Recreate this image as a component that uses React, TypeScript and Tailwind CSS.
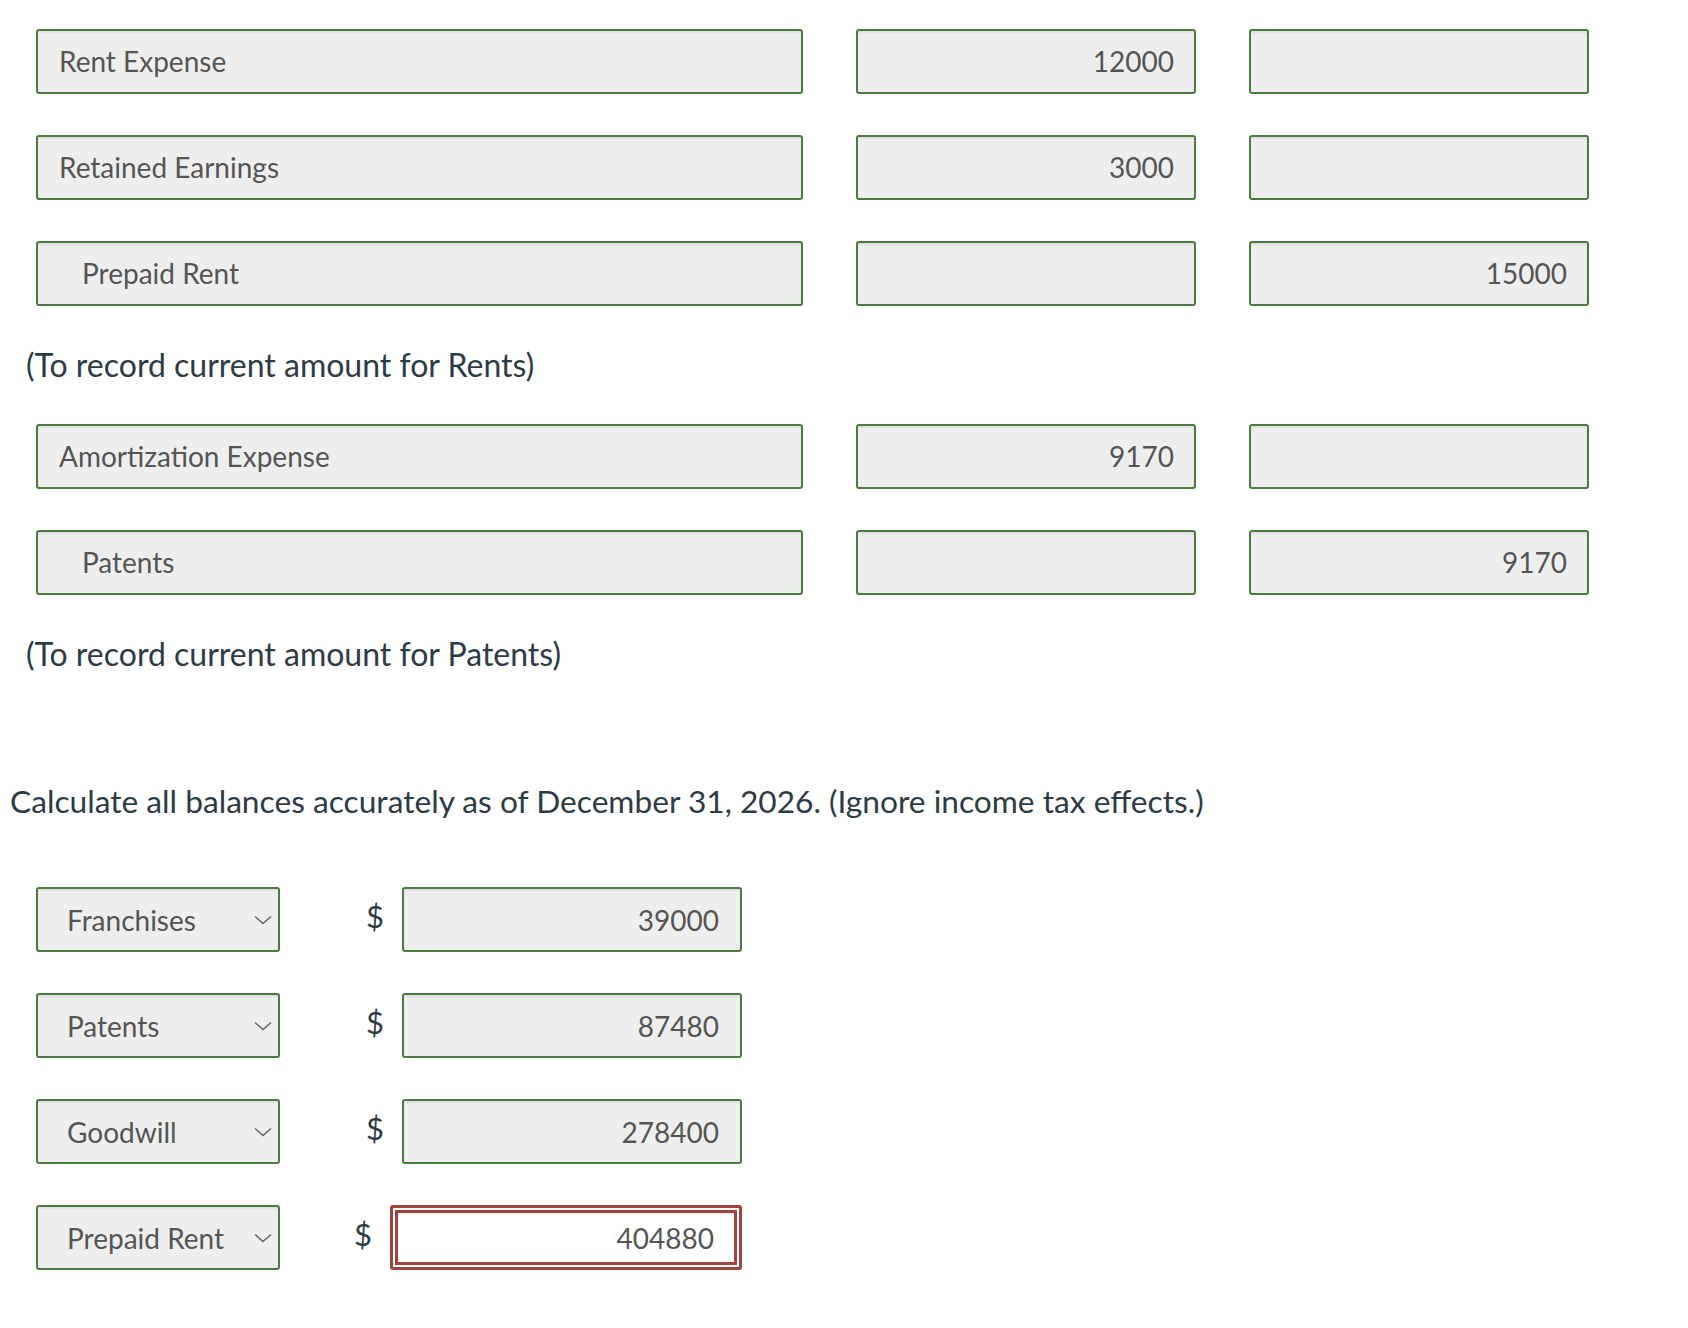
import React from "react";

const boxBase =
  "h-[65px] rounded-[3px] border-2 border-[#4d7a41] bg-[#eeeeee] shadow-[inset_0_2px_2px_rgba(0,0,0,0.06)] flex items-center text-[28px] text-[#555555]";

function LabelBox({ text, indent }: { text: string; indent?: boolean }) {
  return (
    <div className={`${boxBase} w-[767px] ${indent ? "pl-[44px]" : "pl-[21px]"}`}>
      <span className="-mt-[1px]">{text}</span>
    </div>
  );
}

function NumBox({ value }: { value?: string }) {
  return (
    <div className={`${boxBase} w-[340px] justify-end pr-[20px]`}>
      <span className="-mt-[1px]">{value ?? ""}</span>
    </div>
  );
}

function JournalRow({
  label,
  indent,
  debit,
  credit,
}: {
  label: string;
  indent?: boolean;
  debit?: string;
  credit?: string;
}) {
  return (
    <div className="flex gap-[53px] pl-[36px]">
      <LabelBox text={label} indent={indent} />
      <NumBox value={debit} />
      <NumBox value={credit} />
    </div>
  );
}

function Caption({ text }: { text: string }) {
  return <div className="h-[36px] leading-[36px] pl-[26px] text-[32px] text-[#2d3b45]">{text}</div>;
}

function Chevron() {
  return (
    <svg width="18" height="10" viewBox="0 0 18 10" className="shrink-0">
      <polyline points="1,1.5 9,8.5 17,1.5" fill="none" stroke="#666666" strokeWidth="1.6" />
    </svg>
  );
}

function BalanceRow({ label, value, error }: { label: string; value: string; error?: boolean }) {
  return (
    <div className="flex items-center pl-[36px]">
      <div className={`${boxBase} w-[244px] justify-between pl-[29px] pr-[6px]`}>
        <span>{label}</span>
        <Chevron />
      </div>
      <div className="w-[462px] flex items-center justify-end gap-[18px]">
        <span className="text-[31px] text-[#2d3b45] -mt-[6px]">$</span>
        {error ? (
          <div className="w-[352px] h-[65px] rounded-[3px] border-[3px] border-[#a0443f] p-[2px] bg-white">
            <div className="h-full border-[3px] border-[#a0443f] bg-white flex items-center justify-end pr-[20px] text-[28px] text-[#555555] shadow-[inset_0_2px_2px_rgba(0,0,0,0.05)]">
              {value}
            </div>
          </div>
        ) : (
          <div className={`${boxBase} w-[340px] justify-end pr-[21px]`}>{value}</div>
        )}
      </div>
    </div>
  );
}

export default function App() {
  return (
    <div className="w-[1688px] min-h-[1328px] bg-white font-['Lato',sans-serif] pt-[29px]">
      <div className="flex flex-col gap-[41px]">
        <JournalRow label="Rent Expense" debit="12000" />
        <JournalRow label="Retained Earnings" debit="3000" />
        <JournalRow label="Prepaid Rent" indent credit="15000" />
        <Caption text="(To record current amount for Rents)" />
        <JournalRow label="Amortization Expense" debit="9170" />
        <JournalRow label="Patents" indent credit="9170" />
        <Caption text="(To record current amount for Patents)" />
      </div>
      <div className="mt-[111px] h-[36px] leading-[36px] pl-[10px] text-[31.7px] text-[#2d3b45]">
        Calculate all balances accurately as of December 31, 2026. (Ignore income tax effects.)
      </div>
      <div className="mt-[68px] flex flex-col gap-[41px]">
        <BalanceRow label="Franchises" value="39000" />
        <BalanceRow label="Patents" value="87480" />
        <BalanceRow label="Goodwill" value="278400" />
        <BalanceRow label="Prepaid Rent" value="404880" error />
      </div>
    </div>
  );
}
